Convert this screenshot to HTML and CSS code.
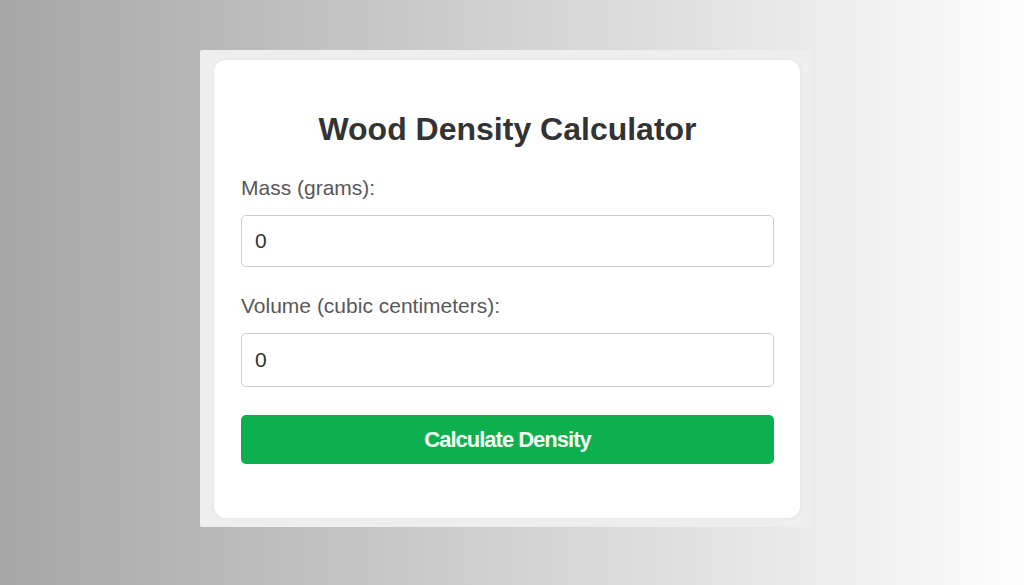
FILE: index.html
```html
<!DOCTYPE html>
<html>
<head>
<meta charset="utf-8">
<link rel="stylesheet" href="styles.css">
</head>
<body>
<div class="frame">
  <div class="card">
    <h2 class="title">Wood Density Calculator</h2>
    <label class="label" for="mass">Mass (grams):</label>
    <input class="field" id="mass" type="number" value="0">
    <label class="label" for="volume">Volume (cubic centimeters):</label>
    <input class="field field-tall" id="volume" type="number" value="0">
    <button class="btn" type="button">Calculate Density</button>
  </div>
</div>
</body>
</html>
```

FILE: styles.css
```css
html, body {
  margin: 0;
  height: 585px;
  overflow: hidden;
}
body {
  background: linear-gradient(to right, #a6a6a6 0%, #fdfdfd 100%);
  font-family: "Liberation Sans", Arial, sans-serif;
  padding: 50px 0 0 200px;
  box-sizing: border-box;
}
.frame {
  width: 612px;
  height: 477px;
  box-sizing: border-box;
  padding: 10px 12px 9px 14px;
  background: #eeeeee;
  border-radius: 2px;
}
.card {
  width: 586px;
  height: 458px;
  box-sizing: border-box;
  background: #ffffff;
  border-radius: 12px;
  padding: 51px 26px 0 27px;
  display: flex;
  flex-direction: column;
  box-shadow: 0 0 4px rgba(0,0,0,0.06);
}
.title {
  margin: 0 0 28px 0;
  font-size: 32px;
  line-height: 37px;
  font-weight: bold;
  color: #333333;
  text-align: center;
}
.label {
  display: block;
  font-size: 21px;
  line-height: 24px;
  color: #585858;
  margin: 0 0 15px 0;
}
.field {
  display: block;
  width: 533px;
  height: 52px;
  box-sizing: border-box;
  border: 1px solid #cccccc;
  border-radius: 5px;
  padding: 0 13px;
  margin: 0 0 27px 0;
  font-family: "Liberation Sans", Arial, sans-serif;
  font-size: 21px;
  color: #333333;
  background: #ffffff;
  outline: none;
  -moz-appearance: textfield;
}
.field::-webkit-inner-spin-button,
.field::-webkit-outer-spin-button {
  -webkit-appearance: none;
  margin: 0;
}
.field-tall {
  height: 54px;
  margin-bottom: 28px;
}
.btn {
  width: 533px;
  height: 49px;
  border: none;
  border-radius: 5px;
  background: #0db04f;
  color: #f4fff4;
  font-family: "Liberation Sans", Arial, sans-serif;
  font-size: 22px;
  font-weight: bold;
  letter-spacing: -1px;
  padding: 0;
  cursor: pointer;
}
```
